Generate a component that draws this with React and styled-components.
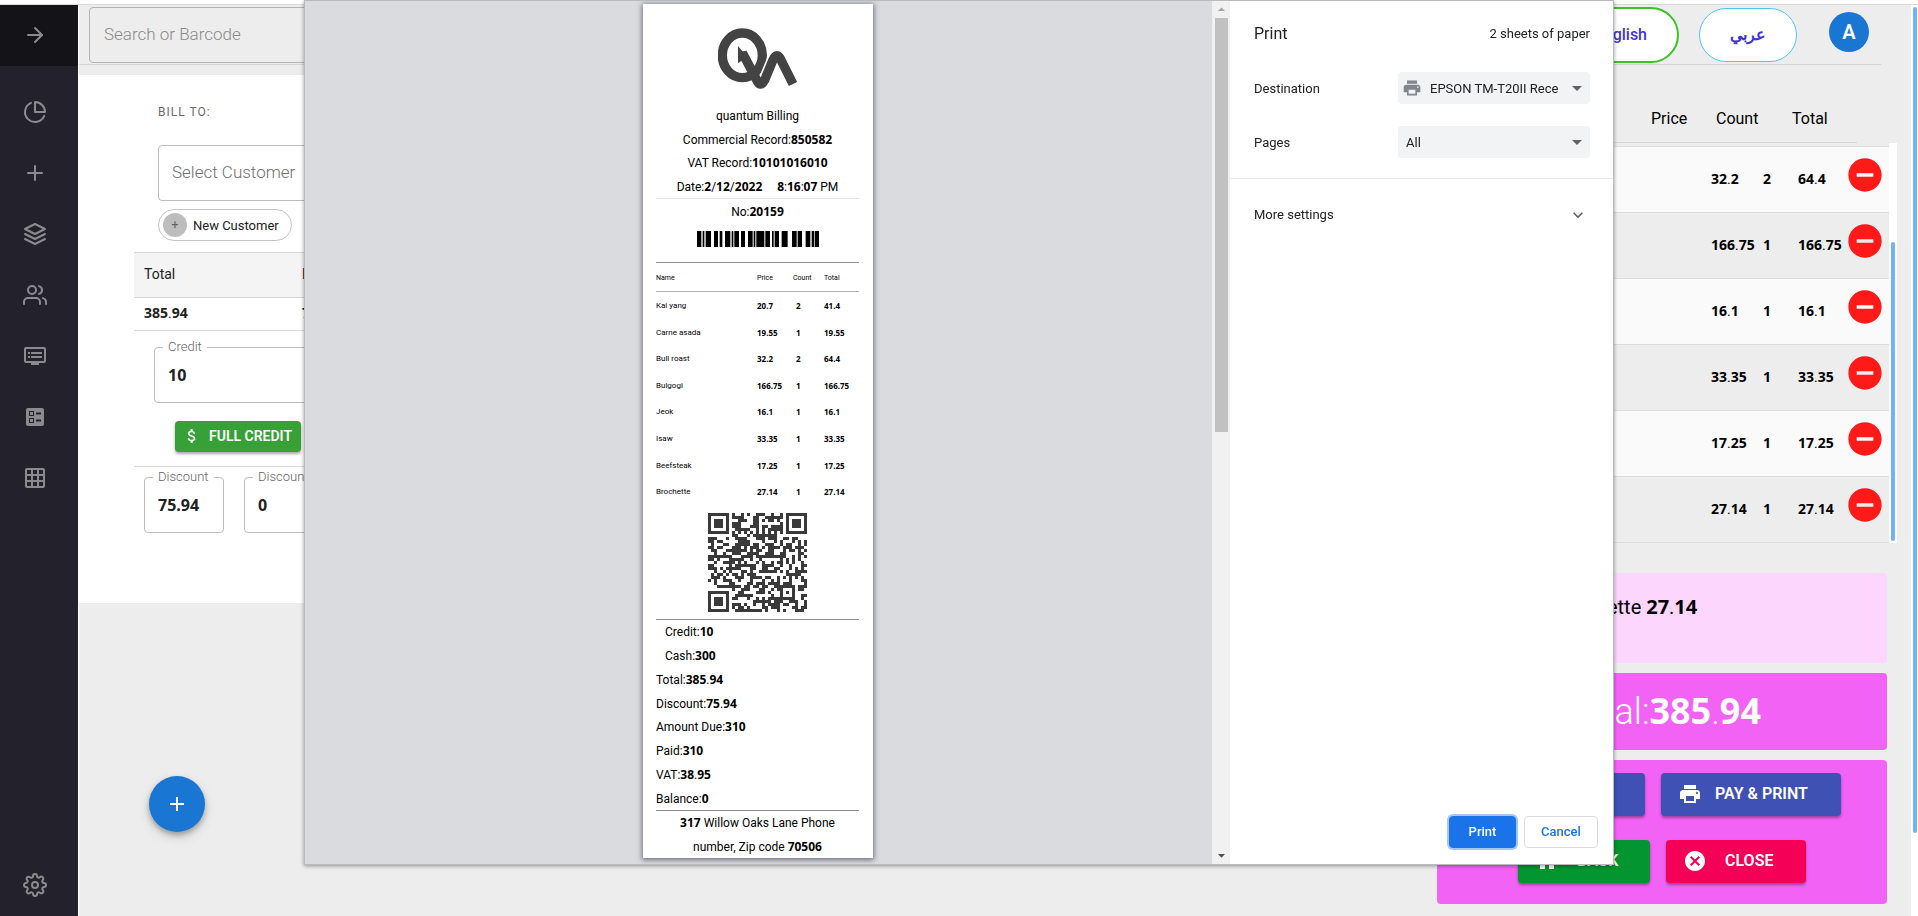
import styled, { createGlobalStyle } from 'styled-components'
import { FiArrowRight, FiPieChart, FiPlus, FiLayers, FiUsers, FiSettings } from 'react-icons/fi'
import { MdDvr, MdBallot, MdGridOn, MdAdd, MdAttachMoney, MdPrint, MdHome, MdCancel, MdPayment, MdRemoveCircle, MdArrowDropDown, MdArrowDropUp, MdExpandMore } from 'react-icons/md'

const GlobalStyle = createGlobalStyle`
    * {
        box-sizing: border-box;
    }
    body {
        margin: 0;
        background: #ededed;
        color: #212121;
        font-family: Roboto, "Noto Sans", sans-serif;
        font-size: 16px;
        overflow: hidden;
    }
    button, input, select {
        font-family: inherit;
        margin: 0;
    }
`

const Page = styled.div`
    height: 100vh;
    display: flex;
    flex-direction: column;
`

const TopLine = styled.div`
    height: 5px;
    flex-shrink: 0;
    background: white;
    border-bottom: 1px solid #d8d8d8;
`

const Shell = styled.div`
    flex: 1;
    min-height: 0;
    display: flex;
`

const Sidebar = styled.nav`
    width: 79px;
    flex-shrink: 0;
    display: flex;
    flex-direction: column;
    background: #23222c;
    border-right: 1px solid white;
`

const NavItem = styled.a`
    height: 61px;
    padding: 0 8px 2px 0;
    display: flex;
    align-items: center;
    justify-content: center;
    color: #8b8b8f;
    background: ${props => props.$dark ? '#141317' : 'transparent'};
    margin-bottom: ${props => props.$dark ? '16px' : '0'};
    margin-top: ${props => props.$last ? 'auto' : '0'};
`

const Main = styled.main`
    flex: 1;
    min-width: 0;
    display: flex;
    flex-direction: column;
`

const Header = styled.header`
    height: 60px;
    margin-right: 30px;
    padding: 0 12px 0 10px;
    display: flex;
    align-items: center;
    justify-content: space-between;
    border-bottom: 1px solid #d4d4d4;
`

const SearchInput = styled.input`
    width: 480px;
    height: 56px;
    padding: 0 14px 2px;
    border: 1px solid #b4b4b4;
    border-radius: 4px;
    background: transparent;
    font-size: 17px;
    font-weight: 300;
    &::placeholder {
        color: #8a8a8a;
        opacity: 1;
    }
`

const HeaderRight = styled.div`
    display: flex;
    align-items: center;
    gap: 20px;
`

const LangButton = styled.button`
    height: ${props => props.$active ? '56px' : '54px'};
    padding: 0 30px;
    border: ${props => props.$active ? '2px solid #3cc421' : '1px solid #4fc3f7'};
    border-radius: 28px;
    background: white;
    color: #3f35cf;
    font-size: 16px;
    font-weight: ${props => props.$active ? '500' : '700'};
    min-width: 98px;
`

const Avatar = styled.div`
    width: 40px;
    height: 40px;
    margin: 0 0 6px 12px;
    border-radius: 50%;
    display: flex;
    align-items: center;
    justify-content: center;
    background: #1976d2;
    color: white;
    font-size: 20px;
    font-weight: 600;
`

const Content = styled.div`
    flex: 1;
    min-height: 0;
    display: flex;
    justify-content: space-between;
    align-items: flex-start;
`

const BillPanel = styled.section`
    width: 500px;
    height: 528px;
    margin-top: 10px;
    padding: 29px 0 0 55px;
    background: white;
`

const BillTo = styled.p`
    margin: 0 0 25px 24px;
    font-size: 12px;
    line-height: 16px;
    letter-spacing: 1px;
    color: #6b6b6b;
`

const CustomerInput = styled.input`
    display: block;
    width: 360px;
    height: 56px;
    margin-left: 24px;
    padding: 0 13px 2px;
    border: 1px solid #bdbdbd;
    border-radius: 4px;
    font-size: 17px;
    font-weight: 300;
    &::placeholder {
        color: #6f6f6f;
        opacity: 1;
    }
`

const Chip = styled.button`
    height: 32px;
    margin: 8px 0 0 24px;
    padding: 0 12px 0 4px;
    display: flex;
    align-items: center;
    gap: 6px;
    border: 1px solid #c4c4c4;
    border-radius: 16px;
    background: white;
    color: #212121;
    font-size: 13px;
    span {
        width: 24px;
        height: 24px;
        border-radius: 50%;
        background: #bdbdbd;
        color: #616161;
        font-size: 12px;
        line-height: 24px;
    }
`

const BillTable = styled.table`
    width: 400px;
    margin-top: 11px;
    border-collapse: collapse;
    table-layout: fixed;
    th {
        height: 45px;
        padding: 0 10px 2px;
        text-align: left;
        font-size: 14px;
        font-weight: 400;
        background: #f4f4f4;
        border-top: 1px solid #d8d8d8;
        border-bottom: 1px solid #d8d8d8;
    }
    td {
        height: 33px;
        padding: 0 10px 3px;
        font-size: 14px;
        border-bottom: 1px solid #dcdcdc;
    }
`

const Field = styled.fieldset`
    width: ${props => props.$width};
    height: 62px;
    margin: ${props => props.$inset ? '10px 0 0 20px' : '0'};
    padding: 0 13px;
    border: 1px solid #bdbdbd;
    border-radius: 4px;
    min-width: 0;
    legend {
        padding: 0 5px;
        margin-left: -5px;
        height: 12px;
        line-height: 12px;
        font-size: 13px;
        font-weight: 300;
        color: #666;
        white-space: nowrap;
    }
    input {
        width: 100%;
        height: 44px;
        padding: 0;
        border: 0;
        outline: 0;
        background: transparent;
        font-family: "Open Sans", sans-serif;
        font-size: 16px;
        font-weight: 700;
        color: #212121;
    }
`

const FullCredit = styled.button`
    width: 126px;
    height: 31px;
    margin: 18px 0 14px 41px;
    padding: 0 0 2px 8px;
    display: flex;
    align-items: center;
    gap: 8px;
    border: 0;
    border-radius: 4px;
    background: #37a137;
    color: white;
    font-size: 14px;
    font-weight: 600;
    white-space: nowrap;
    box-shadow: 0 2px 3px rgba(0, 0, 0, 0.35);
`

const DiscountRow = styled.div`
    width: 400px;
    padding: 4px 10px;
    display: flex;
    gap: 20px;
    border-top: 1px solid #dcdcdc;
`

const Fab = styled.button`
    position: absolute;
    left: 149px;
    bottom: 84px;
    width: 56px;
    height: 56px;
    padding: 0;
    display: flex;
    align-items: center;
    justify-content: center;
    border: 0;
    border-radius: 50%;
    background: #1976d2;
    color: white;
    box-shadow: 0 3px 5px rgba(0, 0, 0, 0.25), 0 5px 12px rgba(0, 0, 0, 0.15);
`

const Cart = styled.section`
    width: 460px;
    flex-shrink: 0;
    margin-right: 14px;
`

const CartHead = styled.table`
    width: 420px;
    height: 78px;
    padding-top: 29px;
    border-spacing: 0;
    table-layout: fixed;
    border-bottom: 1px solid #d8d8d8;
    th {
        padding: 0;
        text-align: left;
        font-weight: 400;
        font-size: 16px;
        color: black;
    }
`

const CartBody = styled.div`
    display: flex;
    margin-bottom: 30px;
`

const CartTable = styled.table`
    flex: 1;
    margin-top: 3px;
    border-spacing: 0;
    border-top: 1px solid #dcdcdc;
    table-layout: fixed;
    td {
        height: 66px;
        padding: 0 0 2px;
        font-size: 14px;
        color: black;
        border-bottom: 1px solid #dcdcdc;
    }
    tr:nth-child(odd) td {
        background: #fafafa;
    }
`

const RemoveButton = styled.button`
    display: flex;
    margin-bottom: 8px;
    padding: 0;
    border: 0;
    background: none;
    color: #ff1a1a;
`

const Track = styled.div`
    width: ${props => props.$page ? '7px' : '8px'};
    flex-shrink: 0;
    padding: ${props => props.$page ? '2px 1px 83px 2px' : '99px 2px 2px'};
    background: white;
    div {
        height: 100%;
        border-radius: 2px;
        background: #70b3fb;
    }
`

const LastItem = styled.div`
    height: 90px;
    margin: 0 10px 10px 0;
    padding: 22px 0 0 118px;
    border-radius: 4px;
    background: #fdd6fe;
    color: black;
    font-size: 20px;
    line-height: 24px;
`

const GrandTotal = styled.div`
    height: 77px;
    margin: 0 10px 10px 0;
    border-radius: 4px;
    background: #f263f5;
    color: white;
    font-size: 36px;
    font-weight: 300;
    line-height: 76px;
    text-align: center;
`

const Actions = styled.div`
    height: 144px;
    margin-right: 10px;
    padding-top: 13px;
    display: flex;
    flex-direction: column;
    gap: 24px;
    border-radius: 4px;
    background: #f263f5;
`

const ActionRow = styled.div`
    display: flex;
    justify-content: center;
    gap: 16px;
`

const ActionButton = styled.button`
    width: ${props => props.$width};
    height: 43px;
    padding: 0 0 2px 17px;
    display: flex;
    align-items: center;
    gap: ${props => props.$wide ? '18px' : '13px'};
    border: 0;
    border-radius: 4px;
    background: ${props => props.$color};
    color: white;
    font-size: 16px;
    font-weight: 600;
    white-space: nowrap;
    box-shadow: 0 2px 3px rgba(0, 0, 0, 0.35);
`

const Overlay = styled.div`
    position: fixed;
    inset: 0;
    display: flex;
    justify-content: center;
    align-items: flex-start;
`

const Dialog = styled.div`
    width: 1310px;
    height: 865px;
    display: flex;
    border: 1px solid #b9babd;
    background: white;
    box-shadow: 0 1px 4px rgba(0, 0, 0, 0.4);
`

const Preview = styled.div`
    flex: 1;
    overflow: hidden;
    display: flex;
    justify-content: center;
    align-items: flex-start;
    padding: 3px 1px 0 0;
    background: #dadbdf;
`

const Paper = styled.div`
    width: 230px;
    height: 854px;
    padding: 24px 14px 0 13px;
    background: white;
    color: black;
    font-size: 12px;
    box-shadow: 0 1px 5px 1px rgba(40, 40, 60, 0.6);
`

const Logo = styled.svg`
    display: block;
    width: 80px;
    height: 62px;
    margin: 0 auto 14px;
`

const Lines = styled.div`
    height: ${props => props.$height};
    display: grid;
    grid-auto-rows: 1fr;
    align-items: center;
    text-align: ${props => props.$left ? 'left' : 'center'};
    p {
        margin: 0;
        white-space: pre;
    }
`

const Indented = styled.p`
    padding-left: 9px;
`

const Rule = styled.hr`
    height: 1px;
    margin: 0;
    border: 0;
    background: ${props => props.$light ? '#e2e2e2' : '#8f8f8f'};
`

const Barcode = styled.svg`
    display: block;
    width: 122px;
    height: 16px;
    margin: 8px auto 15px;
`

const ReceiptTable = styled.table`
    width: 100%;
    height: 242px;
    border-collapse: collapse;
    table-layout: fixed;
    font-size: 8px;
    th, td {
        padding: 0;
        text-align: left;
        font-weight: 400;
    }
    th {
        height: 28px;
        padding-top: 3px;
        font-size: 7px;
        border-bottom: 1px solid #b5b5b5;
    }
    td + td {
        font-family: "Open Sans", sans-serif;
        font-weight: 700;
    }
    td:nth-child(3) {
        padding-left: 3px;
    }
`

const Qr = styled.svg`
    display: block;
    width: 99px;
    height: 99px;
    margin: 8px auto 7px;
`

const ScrollBar = styled.div`
    width: 18px;
    flex-shrink: 0;
    display: flex;
    flex-direction: column;
    align-items: center;
    justify-content: space-between;
    background: #f1f1f1;
    div {
        width: 13px;
        height: 414px;
        margin-bottom: auto;
        background: #c1c1c1;
    }
`

const Settings = styled.form`
    width: 383px;
    flex-shrink: 0;
    display: flex;
    flex-direction: column;
    color: #202124;
    font-size: 13px;
`

const SettingRow = styled.div`
    min-height: 54px;
    padding: 0 23px 0 24px;
    display: flex;
    align-items: center;
    justify-content: space-between;
`

const SettingsHead = styled(SettingRow)`
    min-height: 60px;
    padding-top: 4px;
    h1 {
        margin: 0;
        font-size: 16px;
        font-weight: 400;
    }
`

const SelectBox = styled.div`
    width: 192px;
    height: 32px;
    padding: 0 1px 0 4px;
    display: flex;
    align-items: center;
    border-radius: 4px;
    background: #f1f3f4;
    color: #5f6368;
    select {
        flex: 1;
        min-width: 0;
        height: 32px;
        padding: 0 0 0 ${props => props.$icon ? '8px' : '4px'};
        appearance: none;
        border: 0;
        background: transparent;
        color: #202124;
        font-size: 13px;
    }
`

const Divider = styled.div`
    height: 1px;
    margin-top: 9px;
    background: #e8eaed;
`

const MoreButton = styled.button`
    height: 71px;
    padding: 0 25px 0 24px;
    display: flex;
    align-items: center;
    justify-content: space-between;
    border: 0;
    background: none;
    color: #202124;
    font-size: 13px;
    svg {
        color: #5f6368;
    }
`

const DialogButtons = styled.div`
    margin-top: auto;
    padding: 0 15px 16px;
    display: flex;
    justify-content: flex-end;
    gap: 8px;
`

const DialogButton = styled.button`
    width: ${props => props.$primary ? '67px' : '74px'};
    height: 32px;
    padding: 0 0 1px;
    border: 1px solid ${props => props.$primary ? '#1a73e8' : '#dadce0'};
    border-radius: 4px;
    background: ${props => props.$primary ? '#1a73e8' : 'white'};
    color: ${props => props.$primary ? 'white' : '#1a73e8'};
    font-size: 13px;
    font-weight: 500;
    box-shadow: ${props => props.$primary ? '0 0 0 2px #a3c7f7' : 'none'};
`

const Digit = styled.b`
    font-family: "Open Sans", sans-serif;
    font-weight: 700;
`

// digits use a different, bolder face than the letters around them
function Mixed({ text }) {
    return text.split(/(\d+)/).map((part, i) =>
        i % 2 ? <Digit key={i}>{part}</Digit> : part
    )
}

const navItems = [
    ['Reports', FiPieChart],
    ['New', FiPlus],
    ['Products', FiLayers],
    ['Customers', FiUsers],
    ['Orders', MdDvr],
    ['Bills', MdBallot],
    ['Tables', MdGridOn],
]

const items = [
    ['Kai yang', '20.7', '2', '41.4'],
    ['Carne asada', '19.55', '1', '19.55'],
    ['Bull roast', '32.2', '2', '64.4'],
    ['Bulgogi', '166.75', '1', '166.75'],
    ['Jeok', '16.1', '1', '16.1'],
    ['Isaw', '33.35', '1', '33.35'],
    ['Beefsteak', '17.25', '1', '17.25'],
    ['Brochette', '27.14', '1', '27.14'],
]

const bars = [
    [0, 13], [17, 5], [26, 16], [51, 12], [68, 8], [84, 16], [104, 5], [112, 14], [132, 12], [153, 14], [170, 5],
    [178, 24], [205, 14], [225, 5], [233, 13], [254, 18], [285, 14], [302, 13], [326, 14], [344, 8], [354, 12],
]

const QR_SIZE = 33

function inFinder(x, y, fx, fy) {
    const dx = Math.abs(x - fx)
    const dy = Math.abs(y - fy)
    const d = Math.max(dx, dy)
    if (d > 4) return null
    return d !== 2 && d !== 4
}

function qrPath() {
    let seed = 20159
    let d = ''
    for (let y = 0; y < QR_SIZE; y++) {
        for (let x = 0; x < QR_SIZE; x++) {
            seed = (seed * 1103515245 + 12345) % 2147483648
            let on = seed / 2147483648 > 0.48
            if (x === 6) on = y % 2 === 0
            if (y === 6) on = x % 2 === 0
            const align = Math.max(Math.abs(x - 26), Math.abs(y - 26))
            if (align <= 2) on = align !== 1
            const finder = inFinder(x, y, 3, 3) ?? inFinder(x, y, 29, 3) ?? inFinder(x, y, 3, 29)
            if (finder !== null) on = finder
            if (on) d += `M${x} ${y}h1v1h-1z`
        }
    }
    return d
}

function Receipt() {
    return (
        <Paper>
            <Logo viewBox="235 84 240 186" fill="none" stroke="#434343" strokeWidth="28">
                <ellipse cx="308" cy="166" rx="60" ry="67" />
                <path d="M376 240L402 178" stroke="white" strokeWidth="40" />
                <path d="M308 158L350 238Q362 266 375 240L400 180Q412 154 424 180L460 252" />
                <path d="M295 138L308 154L318 153L326 170L312 178L295 190Z" fill="#434343" stroke="none" />
            </Logo>
            <Lines $height="94px">
                <p>quantum Billing</p>
                <p><Mixed text="Commercial Record:850582" /></p>
                <p><Mixed text="VAT Record:10101016010" /></p>
                <p><Mixed text="Date:2/12/2022     8:16:07 PM" /></p>
            </Lines>
            <Rule $light />
            <Lines $height="24px">
                <p><Mixed text="No:20159" /></p>
            </Lines>
            <Barcode viewBox="0 0 366 48">
                {bars.map(([x, w]) => <rect key={x} x={x} width={w} height="48" />)}
            </Barcode>
            <Rule />
            <ReceiptTable>
                <colgroup>
                    <col width="101" />
                    <col width="36" />
                    <col width="31" />
                    <col />
                </colgroup>
                <thead>
                    <tr>
                        <th>Name</th>
                        <th>Price</th>
                        <th>Count</th>
                        <th>Total</th>
                    </tr>
                </thead>
                <tbody>
                    {items.map(([name, price, count, total]) => (
                        <tr key={name}>
                            <td>{name}</td>
                            <td>{price}</td>
                            <td>{count}</td>
                            <td>{total}</td>
                        </tr>
                    ))}
                </tbody>
            </ReceiptTable>
            <Qr viewBox="0 0 33 33" shapeRendering="crispEdges">
                <path d={qrPath()} fill="#3a3a3a" />
            </Qr>
            <Rule />
            <Lines $height="190px" $left>
                <Indented><Mixed text="Credit:10" /></Indented>
                <Indented><Mixed text="Cash:300" /></Indented>
                <p><Mixed text="Total:385.94" /></p>
                <p><Mixed text="Discount:75.94" /></p>
                <p><Mixed text="Amount Due:310" /></p>
                <p><Mixed text="Paid:310" /></p>
                <p><Mixed text="VAT:38.95" /></p>
                <p><Mixed text="Balance:0" /></p>
            </Lines>
            <Rule />
            <Lines $height="47px">
                <p><Mixed text="317 Willow Oaks Lane Phone" /></p>
                <p><Mixed text="number, Zip code 70506" /></p>
            </Lines>
        </Paper>
    )
}

function PrintDialog() {
    return (
        <Overlay>
            <Dialog role="dialog" aria-label="Print">
                <Preview>
                    <Receipt />
                </Preview>
                <ScrollBar>
                    <MdArrowDropUp size={17} color="#a3a3a3" />
                    <div />
                    <MdArrowDropDown size={17} color="#505050" />
                </ScrollBar>
                <Settings>
                    <SettingsHead>
                        <h1>Print</h1>
                        <span>2 sheets of paper</span>
                    </SettingsHead>
                    <SettingRow>
                        <label htmlFor="destination">Destination</label>
                        <SelectBox $icon>
                            <MdPrint size={20} color="#80868b" />
                            <select id="destination">
                                <option>EPSON TM-T20II Rece</option>
                            </select>
                            <MdArrowDropDown size={24} />
                        </SelectBox>
                    </SettingRow>
                    <SettingRow>
                        <label htmlFor="pages">Pages</label>
                        <SelectBox>
                            <select id="pages">
                                <option>All</option>
                            </select>
                            <MdArrowDropDown size={24} />
                        </SelectBox>
                    </SettingRow>
                    <Divider />
                    <MoreButton type="button">
                        More settings
                        <MdExpandMore size={20} />
                    </MoreButton>
                    <DialogButtons>
                        <DialogButton type="button" $primary>Print</DialogButton>
                        <DialogButton type="button">Cancel</DialogButton>
                    </DialogButtons>
                </Settings>
            </Dialog>
        </Overlay>
    )
}

function Bill() {
    return (
        <BillPanel>
            <BillTo>BILL TO:</BillTo>
            <CustomerInput placeholder="Select Customer" aria-label="Select Customer" />
            <Chip><span>+</span>New Customer</Chip>
            <BillTable>
                <colgroup>
                    <col width="158" />
                    <col />
                </colgroup>
                <thead>
                    <tr>
                        <th>Total</th>
                        <th>Discount</th>
                    </tr>
                </thead>
                <tbody>
                    <tr>
                        <td><Mixed text="385.94" /></td>
                        <td><Mixed text="75.94" /></td>
                    </tr>
                </tbody>
            </BillTable>
            <Field $width="360px" $inset>
                <legend><label htmlFor="credit">Credit</label></legend>
                <input id="credit" defaultValue="10" />
            </Field>
            <FullCredit><MdAttachMoney size={18} />FULL CREDIT</FullCredit>
            <DiscountRow>
                <Field $width="80px">
                    <legend><label htmlFor="discount">Discount</label></legend>
                    <input id="discount" defaultValue="75.94" />
                </Field>
                <Field $width="80px">
                    <legend><label htmlFor="percent">Discount</label></legend>
                    <input id="percent" defaultValue="0" />
                </Field>
            </DiscountRow>
        </BillPanel>
    )
}

function CartPanel() {
    return (
        <Cart>
            <CartHead>
                <colgroup>
                    <col width="214" />
                    <col width="65" />
                    <col width="76" />
                    <col />
                </colgroup>
                <thead>
                    <tr>
                        <th></th>
                        <th>Price</th>
                        <th>Count</th>
                        <th>Total</th>
                    </tr>
                </thead>
            </CartHead>
            <CartBody>
                <CartTable>
                    <colgroup>
                        <col width="274" />
                        <col width="52" />
                        <col width="35" />
                        <col width="47" />
                        <col />
                    </colgroup>
                    <tbody>
                        {items.slice(2).map(([name, price, count, total]) => (
                            <tr key={name}>
                                <td></td>
                                <td><Mixed text={price} /></td>
                                <td><Mixed text={count} /></td>
                                <td><Mixed text={total} /></td>
                                <td>
                                    <RemoveButton aria-label={'Remove ' + name}>
                                        <MdRemoveCircle size={40} />
                                    </RemoveButton>
                                </td>
                            </tr>
                        ))}
                    </tbody>
                </CartTable>
                <Track><div /></Track>
            </CartBody>
            <LastItem><Mixed text="Brochette 27.14" /></LastItem>
            <GrandTotal><Mixed text="Total:385.94" /></GrandTotal>
            <Actions>
                <ActionRow>
                    <ActionButton $width="162px" $color="#3f51b5"><MdPayment size={24} />PAY</ActionButton>
                    <ActionButton $width="180px" $color="#3f51b5"><MdPrint size={24} />PAY &amp; PRINT</ActionButton>
                </ActionRow>
                <ActionRow>
                    <ActionButton $width="132px" $color="#03952f" $wide><MdHome size={24} />BACK</ActionButton>
                    <ActionButton $width="140px" $color="#f50057" $wide><MdCancel size={24} />CLOSE</ActionButton>
                </ActionRow>
            </Actions>
        </Cart>
    )
}

function App() {
    return (
        <Page>
            <GlobalStyle />
            <TopLine />
            <Shell>
                <Sidebar>
                    <NavItem href="#" aria-label="Open menu" $dark><FiArrowRight size={24} /></NavItem>
                    {navItems.map(([label, Icon]) => (
                        <NavItem href="#" key={label} aria-label={label}><Icon size={24} /></NavItem>
                    ))}
                    <NavItem href="#" aria-label="Settings" $last><FiSettings size={24} /></NavItem>
                </Sidebar>
                <Main>
                    <Header>
                        <SearchInput placeholder="Search or Barcode" aria-label="Search or Barcode" />
                        <HeaderRight>
                            <LangButton $active>English</LangButton>
                            <LangButton lang="ar">عربي</LangButton>
                            <Avatar>A</Avatar>
                        </HeaderRight>
                    </Header>
                    <Content>
                        <Bill />
                        <CartPanel />
                    </Content>
                </Main>
                <Track $page><div /></Track>
            </Shell>
            <Fab aria-label="Add"><MdAdd size={24} /></Fab>
            <PrintDialog />
        </Page>
    )
}

export default App
